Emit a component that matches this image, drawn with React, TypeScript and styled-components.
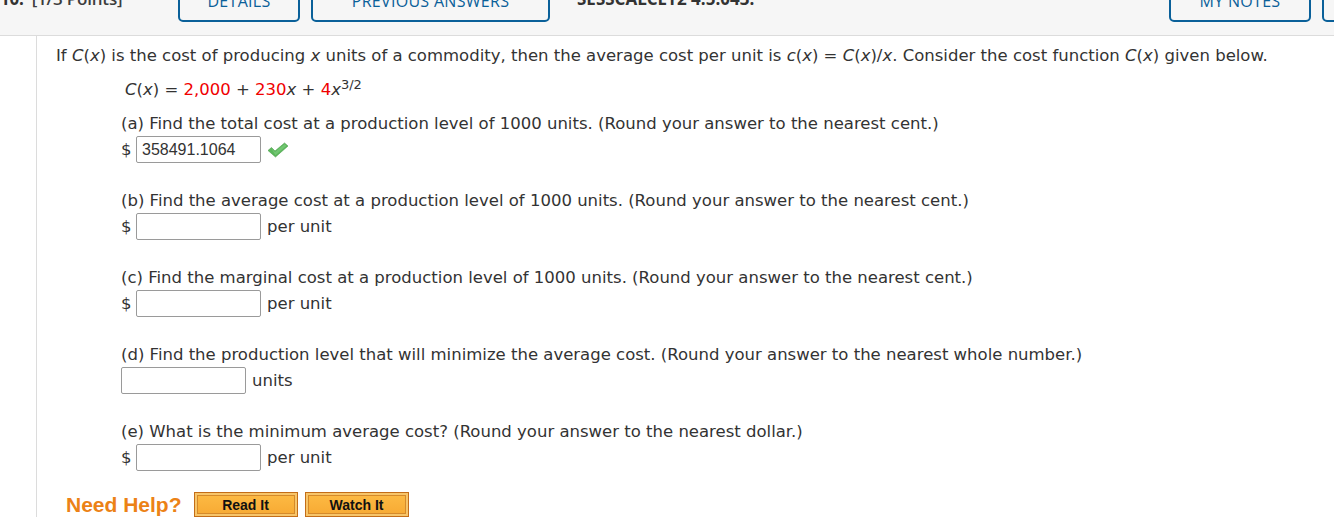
import React from 'react'
import { styled, createGlobalStyle } from 'styled-components'

const GlobalStyle = createGlobalStyle`
  html, body {
    margin: 0;
    padding: 0;
    background: #ffffff;
    overflow: hidden;
  }
  body {
    font-family: "DejaVu Sans", Verdana, sans-serif;
    color: #333333;
  }
`

const TopBar = styled.header`
  height: 35px;
  box-sizing: content-box;
  display: flex;
  align-items: flex-end;
  padding: 0 0 13px 0;
  margin-top: -13px;
  background: #f6f6f6;
  border-bottom: 1px solid #dcdcdc;
  font-family: "Open Sans", "Noto Sans", sans-serif;
  white-space: nowrap;
`

const QuestionNumber = styled.div`
  align-self: flex-start;
  margin-top: 0;
  width: 178px;
  font-size: 17px;
  font-weight: 700;
  color: #333333;
  letter-spacing: -0.2px;
`

const Points = styled.span`
  margin-left: 8px;
  font-weight: 600;
  color: #3d3d3d;
`

const BarButton = styled.button<{ $width: number }>`
  width: ${(p) => p.$width}px;
  height: 44px;
  margin-right: 11px;
  border: 2px solid #0a6099;
  border-radius: 5px;
  background: transparent;
  color: #0a6099;
  font-family: "Open Sans", "Noto Sans", sans-serif;
  font-size: 16px;
  font-weight: 400;
  letter-spacing: 0.3px;
  padding: 1px 0 0;
`

const Code = styled.div`
  align-self: flex-start;
  margin-top: 0;
  margin-left: 16px;
  font-size: 17px;
  font-weight: 700;
  color: #333333;
`

const Spacer = styled.div`
  flex: 1;
`

const Page = styled.main`
  display: flex;
`

const Gutter = styled.div`
  width: 36px;
  flex-shrink: 0;
  border-right: 1px solid #dcdcdc;
  height: 500px;
`

const Content = styled.section`
  padding: 8px 0 0 19px;
  font-size: 16.5px;
  line-height: 24px;
`

const Intro = styled.p`
  margin: 0;
`

const Formula = styled.p`
  margin: 10px 0 0 69px;
`

const Var = styled.i`
  font-style: italic;
`

const Red = styled.span`
  color: #f00000;
`

const Sup = styled.sup`
  font-size: 13px;
  line-height: 0;
  vertical-align: 6px;
`

const Parts = styled.div`
  margin-left: 65px;
  margin-top: 10px;
  display: flex;
  flex-direction: column;
  gap: 26px;
`

const Part = styled.div`
  display: flex;
  flex-direction: column;
`

const Prompt = styled.p`
  margin: 0;
`

const AnswerRow = styled.div`
  display: flex;
  align-items: center;
  height: 27px;
  gap: 6px;
`

const Dollar = styled.span`
  width: 9px;
`

const AnswerBox = styled.div<{ $filled?: boolean }>`
  width: 125px;
  height: 27px;
  box-sizing: border-box;
  border: 1px solid #9a9a9a;
  border-radius: 2px;
  background: #ffffff;
  padding: 0 5px;
  font-family: "Liberation Sans", Arial, sans-serif;
  font-size: 16px;
  line-height: 25px;
  color: #333333;
`

const Unit = styled.span``

const Help = styled.div`
  display: flex;
  align-items: center;
  margin: 21px 0 0 10px;
  gap: 7px;
`

const HelpLabel = styled.span`
  font-family: "Liberation Sans", Arial, sans-serif;
  font-size: 21px;
  font-weight: 700;
  color: #ec8216;
  margin-right: 5px;
`

const HelpButton = styled.button`
  width: 104px;
  height: 25px;
  padding: 0;
  border: 1px solid #c46d17;
  box-shadow: inset 0 0 0 2px #f7c56a, inset 0 0 0 3px #d58a2a;
  background: linear-gradient(#fdbb45, #f7a932);
  font-family: "Liberation Sans", Arial, sans-serif;
  font-size: 14px;
  font-weight: 700;
  color: #111111;
`

const CheckMark = () => (
  <svg width="22" height="16" viewBox="0 0 22 16">
    <path
      d="M1 8.5 L4.5 5.5 L8 9 L17.5 1 L21 4 L8.5 15 Z"
      fill="#5cb85c"
      stroke="#4a9e4a"
      strokeWidth="0.6"
    />
    <path d="M4.5 6.6 L8 10 L17.5 2.2 L19.5 3.8 L8.4 13.2 Z" fill="#72c672" />
  </svg>
)

const parts: { label: string; prefix?: boolean; unit?: string; value?: string; checked?: boolean }[] = [
  {
    label: '(a) Find the total cost at a production level of 1000 units. (Round your answer to the nearest cent.)',
    prefix: true,
    value: '358491.1064',
    checked: true,
  },
  {
    label: '(b) Find the average cost at a production level of 1000 units. (Round your answer to the nearest cent.)',
    prefix: true,
    unit: 'per unit',
  },
  {
    label: '(c) Find the marginal cost at a production level of 1000 units. (Round your answer to the nearest cent.)',
    prefix: true,
    unit: 'per unit',
  },
  {
    label: '(d) Find the production level that will minimize the average cost. (Round your answer to the nearest whole number.)',
    unit: 'units',
  },
  {
    label: '(e) What is the minimum average cost? (Round your answer to the nearest dollar.)',
    prefix: true,
    unit: 'per unit',
  },
]

const App = () => {
  return (
    <>
      <GlobalStyle />
      <TopBar>
        <QuestionNumber>
          10.<Points>[1/3 Points]</Points>
        </QuestionNumber>
        <BarButton $width={122}>DETAILS</BarButton>
        <BarButton $width={239}>PREVIOUS ANSWERS</BarButton>
        <Code>SESSCALCET2 4.5.043.</Code>
        <Spacer />
        <BarButton $width={142}>MY NOTES</BarButton>
        <BarButton $width={120} style={{ marginRight: -108 }}>ASK</BarButton>
      </TopBar>
      <Page>
        <Gutter />
        <Content>
          <Intro>
            If <Var>C</Var>(<Var>x</Var>) is the cost of producing <Var>x</Var> units of a commodity, then the
            average cost per unit is <Var>c</Var>(<Var>x</Var>) = <Var>C</Var>(<Var>x</Var>)/<Var>x</Var>. Consider
            the cost function <Var>C</Var>(<Var>x</Var>) given below.
          </Intro>
          <Formula>
            <Var>C</Var>(<Var>x</Var>) = <Red>2,000</Red> + <Red>230</Red>
            <Var>x</Var> + <Red>4</Red>
            <Var>x</Var>
            <Sup>3/2</Sup>
          </Formula>
          <Parts>
            {parts.map((p) => (
              <Part key={p.label}>
                <Prompt>{p.label}</Prompt>
                <AnswerRow>
                  {p.prefix && <Dollar>$</Dollar>}
                  <AnswerBox $filled={!!p.value}>{p.value}</AnswerBox>
                  {p.checked && <CheckMark />}
                  {p.unit && <Unit>{p.unit}</Unit>}
                </AnswerRow>
              </Part>
            ))}
          </Parts>
          <Help>
            <HelpLabel>Need Help?</HelpLabel>
            <HelpButton>Read It</HelpButton>
            <HelpButton>Watch It</HelpButton>
          </Help>
        </Content>
      </Page>
    </>
  )
}

export default App
